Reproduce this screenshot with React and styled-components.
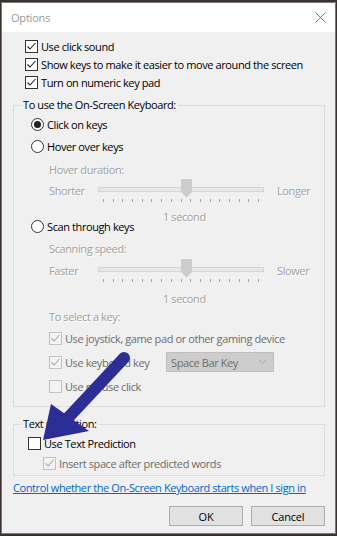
import React from 'react';
import styled, { createGlobalStyle } from 'styled-components';

const GlobalStyle = createGlobalStyle`
  html, body {
    margin: 0;
    padding: 0;
  }
  body {
    width: 337px;
    height: 536px;
    overflow: hidden;
    background: #3d3130;
    font-family: "Open Sans", "Liberation Sans", Arial, sans-serif;
    font-size: 11px;
    letter-spacing: -0.4px;
    color: #000;
  }
`;

const Page = styled.div`
  position: relative;
  width: 337px;
  height: 536px;
  padding: 2px 0 0 1px;
  box-sizing: border-box;
`;

const Window = styled.div`
  width: 335px;
  height: 532px;
  box-sizing: border-box;
  border: 1px solid #7a7a7a;
  background: #f0f0f0;
  display: flex;
  flex-direction: column;
`;

const TitleBar = styled.div`
  height: 29px;
  flex: none;
  background: #fff;
  display: flex;
  align-items: center;
  justify-content: space-between;
  padding: 0 9px 0 9px;
  color: #999;
  font-size: 11px;
  letter-spacing: -0.2px;
`;

const Body = styled.div`
  flex: 1;
  display: flex;
  flex-direction: column;
  padding: 5px 10px 0 11px;
`;

const TopList = styled.div`
  display: flex;
  flex-direction: column;
  margin-left: 12px;
`;

const Row = styled.div`
  display: flex;
  align-items: center;
  height: ${(p) => p.h || 18}px;
  gap: ${(p) => (p.gap != null ? p.gap : 3)}px;
  margin-left: ${(p) => p.indent || 0}px;
  margin-top: ${(p) => p.top || 0}px;
  color: ${(p) => (p.disabled ? '#6d6d6d' : '#000')};
  white-space: nowrap;
`;

const Box = styled.span`
  width: 13px;
  height: 13px;
  box-sizing: border-box;
  flex: none;
  border: 1px solid ${(p) => (p.disabled ? '#c2c2c2' : '#333')};
  background: ${(p) => (p.disabled ? '#f3f3f3' : '#fff')};
  display: flex;
  align-items: center;
  justify-content: center;
`;

const Radio = styled.span`
  width: 13px;
  height: 13px;
  box-sizing: border-box;
  flex: none;
  border: 1px solid #333;
  border-radius: 50%;
  background: #fff;
  display: flex;
  align-items: center;
  justify-content: center;
`;

const Dot = styled.span`
  width: 7px;
  height: 7px;
  border-radius: 50%;
  background: #222;
`;

const Group = styled.fieldset`
  margin: ${(p) => p.top || 0}px 0 0 0;
  padding: 0;
  border: 1px solid #dcdcdc;
  min-width: 0;
`;

const Legend = styled.legend`
  margin-left: 7px;
  padding: 0 2px;
  line-height: 14px;
`;

const GroupInner = styled.div`
  display: flex;
  flex-direction: column;
  padding: ${(p) => p.pad};
`;

const Muted = styled.div`
  color: #a0a0a0;
  text-shadow: 1px 1px 0 #fff;
  line-height: 14px;
  margin-top: ${(p) => p.top || 0}px;
  margin-left: ${(p) => p.indent || 0}px;
`;

const SliderGrid = styled.div`
  display: grid;
  grid-template-columns: 49px 166px 1fr;
  grid-template-rows: 19px 5px auto;
  margin-left: 18px;
  margin-top: ${(p) => p.top}px;
  color: #a0a0a0;
  text-shadow: 1px 1px 0 #fff;
`;

const SideLabel = styled.div`
  line-height: 14px;
  padding-top: 5px;
  padding-left: ${(p) => p.pl || 0}px;
`;

const TrackArea = styled.div`
  position: relative;
  display: flex;
  align-items: center;
`;

const Track = styled.div`
  width: 100%;
  height: 5px;
  box-sizing: border-box;
  border: 1px solid #d6d6d6;
  background: #e7e7e7;
  margin-top: 1px;
`;

const Thumb = styled.svg`
  position: absolute;
  top: 0;
`;

const Ticks = styled.div`
  grid-column: 2;
  display: flex;
  justify-content: space-between;
  padding: 0 5px;
  margin-top: 1px;
`;

const Tick = styled.span`
  width: 1px;
  height: 3px;
  background: #a8a8a8;
`;

const Value = styled.div`
  grid-column: 1 / 4;
  margin-left: 114px;
  line-height: 14px;
  margin-top: ${(p) => p.top || 0}px;
`;

const FixedLabel = styled.span`
  width: ${(p) => p.w}px;
`;

const Select = styled.div`
  width: 108px;
  height: 20px;
  box-sizing: border-box;
  border: 1px solid #bfbfbf;
  background: #cccccc;
  color: #6d6d6d;
  display: flex;
  align-items: center;
  justify-content: space-between;
  padding: 0 6px 0 4px;
`;

const Link = styled.a`
  margin-top: 5px;
  line-height: 14px;
  color: #0066cc;
  text-decoration: underline;
  white-space: nowrap;
`;

const Buttons = styled.div`
  display: flex;
  justify-content: flex-end;
  gap: 8px;
  margin-top: 11px;
`;

const Button = styled.button`
  width: 74px;
  height: 20px;
  box-sizing: border-box;
  border: 1px solid #adadad;
  background: #e1e1e1;
  font-family: inherit;
  font-size: 11px;
  letter-spacing: -0.2px;
  color: #000;
  padding: 0;
`;

const Overlay = styled.svg`
  position: absolute;
  left: 0;
  top: 0;
  pointer-events: none;
`;

const Check = ({ disabled }) => (
  <svg width="11" height="11" viewBox="0 0 11 11">
    <path
      d="M1.5 5.5 L4 8 L9.5 2"
      fill="none"
      stroke={disabled ? '#a9a9a9' : '#222'}
      strokeWidth="1.1"
    />
  </svg>
);

const CheckBox = ({ checked, disabled }) => (
  <Box disabled={disabled}>{checked && <Check disabled={disabled} />}</Box>
);

const Slider = ({ left, right, value, top, valueTop }) => (
  <SliderGrid top={top}>
    <SideLabel>{left}</SideLabel>
    <TrackArea>
      <Track />
      <Thumb width="11" height="19" viewBox="0 0 11 19" style={{ left: `${value * 100}%` }}>
        <path d="M0 0 H11 V13 L5.5 18.5 L0 13 Z" fill="#cccccc" />
      </Thumb>
    </TrackArea>
    <SideLabel pl={13}>{right}</SideLabel>
    <Ticks>
      {Array.from({ length: 17 }).map((_, i) => (
        <Tick key={i} />
      ))}
    </Ticks>
    <Value top={valueTop}>1 second</Value>
  </SliderGrid>
);

export default function App() {
  return (
    <Page>
      <GlobalStyle />
      <Window>
        <TitleBar>
          <span>Options</span>
          <svg width="11" height="11" viewBox="0 0 11 11">
            <path d="M0.5 0.5 L10.5 10.5 M10.5 0.5 L0.5 10.5" stroke="#777" strokeWidth="1" />
          </svg>
        </TitleBar>
        <Body>
          <TopList>
            <Row>
              <CheckBox checked />
              <span>Use click sound</span>
            </Row>
            <Row>
              <CheckBox checked />
              <span>Show keys to make it easier to move around the screen</span>
            </Row>
            <Row>
              <CheckBox checked />
              <span>Turn on numeric key pad</span>
            </Row>
          </TopList>

          <Group top={7}>
            <Legend>To use the On-Screen Keyboard:</Legend>
            <GroupInner pad="1px 0 8px 17px">
              <Row h={22}>
                <Radio>
                  <Dot />
                </Radio>
                <span>Click on keys</span>
              </Row>
              <Row h={22}>
                <Radio />
                <span>Hover over keys</span>
              </Row>
              <Muted indent={18} top={6}>Hover duration:</Muted>
              <Slider left="Shorter" right="Longer" value={0.5} top={2} valueTop={7} />
              <Row h={22} top={-9}>
                <Radio />
                <span>Scan through keys</span>
              </Row>
              <Muted indent={18} top={5}>Scanning speed:</Muted>
              <Slider left="Faster" right="Slower" value={0.5} top={3} valueTop={9} />
              <Muted indent={18} top={4}>To select a key:</Muted>
              <Row h={24} indent={18} top={2} disabled>
                <CheckBox checked disabled />
                <span>Use joystick, game pad or other gaming device</span>
              </Row>
              <Row h={24} indent={18} disabled>
                <CheckBox checked disabled />
                <FixedLabel w={98}>Use keyboard key</FixedLabel>
                <Select>
                  <span>Space Bar Key</span>
                  <svg width="9" height="6" viewBox="0 0 9 6">
                    <path d="M0.5 0.5 L4.5 4.5 L8.5 0.5" fill="none" stroke="#a8a8a8" />
                  </svg>
                </Select>
              </Row>
              <Row h={24} indent={18} disabled>
                <CheckBox disabled />
                <span>Use mouse click</span>
              </Row>
            </GroupInner>
          </Group>

          <Group top={10}>
            <Legend>Text prediction:</Legend>
            <GroupInner pad="2px 0 2px 14px">
              <Row h={20}>
                <CheckBox />
                <span>Use Text Prediction</span>
              </Row>
              <Row h={20} indent={15} disabled>
                <CheckBox checked disabled />
                <span>Insert space after predicted words</span>
              </Row>
            </GroupInner>
          </Group>

          <Link href="#">Control whether the On-Screen Keyboard starts when I sign in</Link>

          <Buttons>
            <Button>OK</Button>
            <Button>Cancel</Button>
          </Buttons>
        </Body>
      </Window>
      <Overlay width="337" height="536" viewBox="0 0 337 536">
        <line x1="124" y1="358" x2="66" y2="420" stroke="#2d2d96" strokeWidth="12" strokeLinecap="round" />
        <polygon points="43,440 51,404 89,431" fill="#2d2d96" />
      </Overlay>
    </Page>
  );
}
